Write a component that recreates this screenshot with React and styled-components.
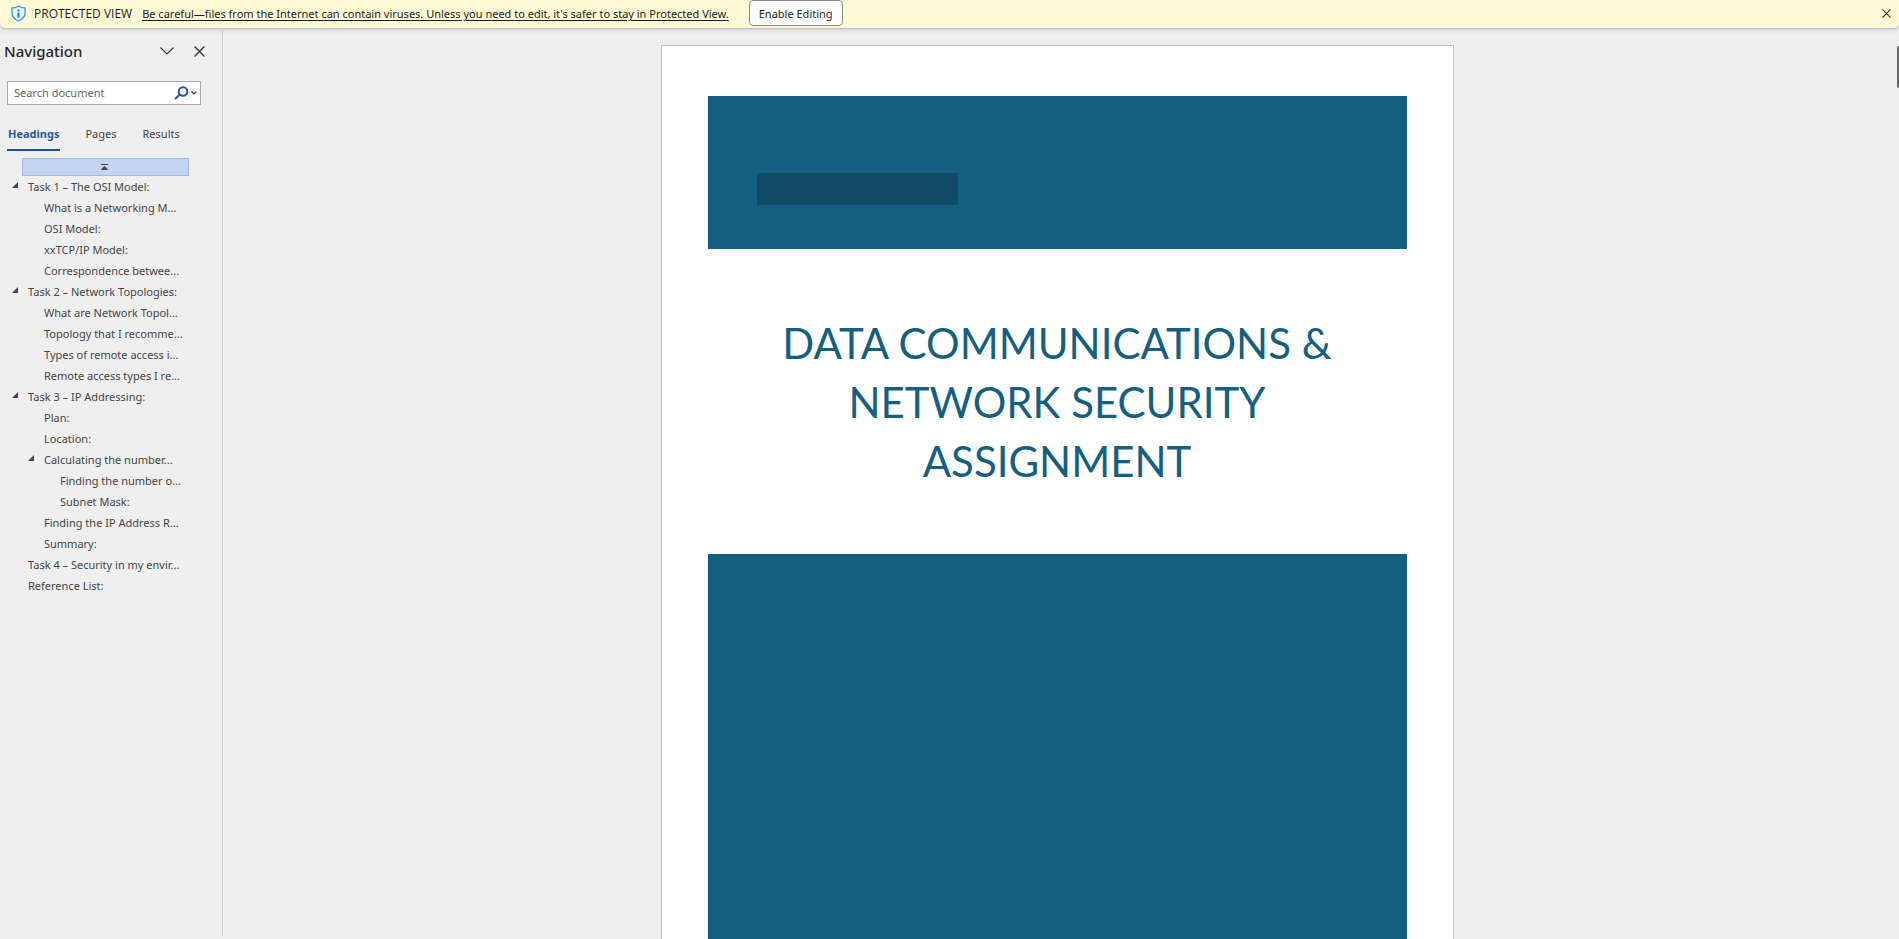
import React, { useState } from "react";
import styled, { createGlobalStyle } from "styled-components";

const GlobalStyle = createGlobalStyle`
  *, *::before, *::after { box-sizing: border-box; }
  body {
    margin: 0;
    background: #efefef;
    color: #262626;
    font-family: "Noto Sans", "Open Sans", sans-serif;
    font-size: 11px;
    line-height: 16px;
  }
  button, input { font: inherit; color: inherit; }
`;

const Window = styled.div`
  display: flex;
  flex-direction: column;
  height: 100vh;
  overflow: hidden;
`;

const MessageBar = styled.header`
  display: flex;
  align-items: center;
  flex: none;
  height: 28px;
  padding: 0 5px 2px 11px;
  background: #fef9d5;
  border-radius: 0 0 5px 5px;
  box-shadow: 0 1px 1px #c4c4c8, 0 2px 5px #cfcfcf;
  z-index: 1;
`;

const BarTitle = styled.strong`
  margin: 0 10px 0 8px;
  padding-top: 2px;
  font-family: "Open Sans", "Noto Sans", sans-serif;
  font-size: 12px;
  font-weight: 400;
  color: #1c1c1c;
`;

const BarLink = styled.a`
  padding-top: 2px;
  color: #1c1c1c;
  text-decoration: underline;
  text-underline-offset: 2px;
`;

const EnableButton = styled.button`
  height: 26px;
  margin-left: 20px;
  padding: 1px 9px 0;
  background: #fff;
  border: 1px solid #8a8a8a;
  border-radius: 4px;
  white-space: nowrap;
`;

const IconButton = styled.button`
  display: flex;
  align-items: center;
  justify-content: center;
  width: ${(p) => p.$width || 16}px;
  height: 16px;
  padding: 0;
  border: 0;
  background: none;
  color: #333;
`;

const Spacer = styled.div`
  flex: 1;
`;

const Body = styled.div`
  display: flex;
  flex: 1;
  min-height: 0;
`;

const Sidebar = styled.aside`
  flex: none;
  width: 223px;
  margin: 2px 0 3px;
  padding-top: 11px;
  border-right: 1px solid #cfcfcf;
`;

const SidebarHeader = styled.div`
  display: flex;
  align-items: center;
  gap: 16px;
  height: 20px;
  padding: 0 15px 0 4px;
`;

const SidebarTitle = styled.h2`
  flex: 1;
  margin: 0;
  font-size: 15px;
  line-height: 20px;
  font-weight: 500;
`;

const SearchBox = styled.form`
  display: flex;
  align-items: center;
  height: 24px;
  margin: 20px 21px 0 7px;
  padding-right: 1px;
  background: #fff;
  border: 1px solid #ababab;
`;

const SearchInput = styled.input`
  flex: 1;
  min-width: 0;
  height: 20px;
  padding: 0 6px 2px;
  border: 0;
  outline: 0;
  background: none;
  &::placeholder { color: #666; opacity: 1; }
`;

const Tabs = styled.div`
  display: flex;
  gap: 24px;
  margin: 18px 0 0 7px;
`;

const Tab = styled.button`
  height: 28px;
  padding: 0 1px 5px;
  border: 0;
  border-bottom: 2px solid ${(p) => (p.$active ? "#1a4fa0" : "transparent")};
  background: none;
  color: ${(p) => (p.$active ? "#2b579a" : "#444")};
  font-weight: ${(p) => (p.$active ? 700 : 400)};
`;

const TopMarker = styled.button`
  display: flex;
  align-items: center;
  justify-content: center;
  width: 167px;
  height: 18px;
  margin: 7px 0 0 22px;
  padding: 0 2px 0 0;
  background: #c3d5f2;
  border: 1px solid #9dbce6;
`;

const Outline = styled.ul`
  margin: 0;
  padding: 0;
  list-style: none;
`;

const OutlineRow = styled.li`
  display: flex;
  height: 21px;
  padding-left: ${(p) => 12 + p.$level * 16}px;
`;

const Toggle = styled.button`
  display: flex;
  width: 16px;
  height: 16px;
  padding: 6px 0 0;
  border: 0;
  background: none;
  color: #444;
`;

const ToggleSpace = styled.span`
  width: 16px;
`;

const OutlineLink = styled.a`
  line-height: 21px;
  color: #444;
  text-decoration: none;
  white-space: nowrap;
`;

const Canvas = styled.main`
  display: flex;
  flex: 1;
  justify-content: center;
  min-width: 0;
  padding: 17px 6px 0 0;
  overflow: hidden;
`;

const Sheet = styled.article`
  display: flex;
  flex-direction: column;
  width: 793px;
  min-height: 1122px;
  margin: 0 auto;
  padding: 50px 46px;
  background: #fff;
  border: 1px solid #c3c3c3;
`;

const Banner = styled.div`
  flex: none;
  height: 153px;
  padding: 77px 49px 0;
  background: #156082;
`;

const Redaction = styled.div`
  width: 201px;
  height: 32px;
  background: #114b65;
`;

const DocTitle = styled.h1`
  margin: 0;
  padding: 65px 48px 63px;
  color: #156082;
  font-family: "Lato", "Noto Sans", sans-serif;
  font-size: 42px;
  line-height: 59px;
  font-weight: 400;
  text-align: center;
`;

const CoverBlock = styled.div`
  flex: 1;
  background: #156082;
`;

const ScrollThumb = styled.div`
  flex: none;
  width: 2px;
  height: 42px;
  margin-top: 18px;
  background: #666;
  border-radius: 2px 0 0 2px;
`;

const ShieldIcon = () => (
  <svg width="15" height="17" viewBox="0 0 15 17" fill="none" aria-hidden="true">
    <path d="M7.500 1C5.600 2.500 3.400 3 1 3v5c0 3.600 2.300 6.300 6.500 8 4.200-1.700 6.500-4.400 6.500-8V3C11.600 3 9.400 2.500 7.500 1Z" fill="#e9f6f8" stroke="#3a96d2" strokeWidth="1.300" />
    <path d="M7.500 4.500v2M7.500 7.500v5" stroke="#1479c4" strokeWidth="2" />
  </svg>
);

const CloseIcon = ({ size }) => (
  <svg width={size} height={size} viewBox="0 0 10 10" fill="none" stroke="currentColor" aria-hidden="true">
    <path d="M.5.5l9 9M9.500.5l-9 9" strokeWidth="1.200" />
  </svg>
);

const ChevronIcon = () => (
  <svg width="14" height="8" viewBox="0 0 14 8" fill="none" stroke="currentColor" aria-hidden="true">
    <path d="M.5.5L7 7l6.500-6.500" strokeWidth="1.100" />
  </svg>
);

const SearchIcon = () => (
  <svg width="15" height="14" viewBox="0 0 15 14" fill="none" stroke="#2b579a" aria-hidden="true">
    <circle cx="9" cy="5.500" r="4.300" strokeWidth="2" />
    <path d="M5.800 8.500L1 13" strokeWidth="2.200" />
  </svg>
);

const SmallChevron = () => (
  <svg width="6" height="4" viewBox="0 0 6 4" fill="none" stroke="#333" aria-hidden="true">
    <path d="M.5.5L3 3 5.500.5" strokeWidth="1.200" />
  </svg>
);

const TopIcon = () => (
  <svg width="7" height="6" viewBox="0 0 7 6" fill="#444" aria-hidden="true">
    <path d="M0 0h7v1H0zM3.500 2L7 5.500V6H0v-.5z" />
  </svg>
);

const TriangleIcon = () => (
  <svg width="6" height="6" viewBox="0 0 6 6" fill="currentColor" aria-hidden="true">
    <path d="M6 0v6H0z" />
  </svg>
);

const headings = [
  { level: 0, text: "Task 1 – The OSI Model:", open: true },
  { level: 1, text: "What is a Networking M..." },
  { level: 1, text: "OSI Model:" },
  { level: 1, text: "xxTCP/IP Model:" },
  { level: 1, text: "Correspondence betwee..." },
  { level: 0, text: "Task 2 – Network Topologies:", open: true },
  { level: 1, text: "What are Network Topol..." },
  { level: 1, text: "Topology that I recomme..." },
  { level: 1, text: "Types of remote access i..." },
  { level: 1, text: "Remote access types I re..." },
  { level: 0, text: "Task 3 – IP Addressing:", open: true },
  { level: 1, text: "Plan:" },
  { level: 1, text: "Location:" },
  { level: 1, text: "Calculating the number...", open: true },
  { level: 2, text: "Finding the number o..." },
  { level: 2, text: "Subnet Mask:" },
  { level: 1, text: "Finding the IP Address R..." },
  { level: 1, text: "Summary:" },
  { level: 0, text: "Task 4 – Security in my envir..." },
  { level: 0, text: "Reference List:" },
];

const tabs = ["Headings", "Pages", "Results"];

export default function App() {
  const [active, setActive] = useState("Headings");
  return (
    <Window>
      <GlobalStyle />
      <MessageBar>
        <ShieldIcon />
        <BarTitle>PROTECTED VIEW</BarTitle>
        <BarLink href="#protected-view">
          Be careful—files from the Internet can contain viruses. Unless you need to edit, it's safer to stay in Protected View.
        </BarLink>
        <EnableButton type="button">Enable Editing</EnableButton>
        <Spacer />
        <IconButton type="button" aria-label="Close message"><CloseIcon size={9} /></IconButton>
      </MessageBar>
      <Body>
        <Sidebar>
          <SidebarHeader>
            <SidebarTitle>Navigation</SidebarTitle>
            <IconButton type="button" aria-label="Pane options"><ChevronIcon /></IconButton>
            <IconButton type="button" aria-label="Close pane"><CloseIcon size={11} /></IconButton>
          </SidebarHeader>
          <SearchBox role="search">
            <SearchInput type="text" aria-label="Search document" placeholder="Search document" />
            <IconButton type="button" aria-label="Search"><SearchIcon /></IconButton>
            <IconButton type="button" $width={10} aria-label="Search options"><SmallChevron /></IconButton>
          </SearchBox>
          <Tabs role="tablist">
            {tabs.map((t) => (
              <Tab key={t} type="button" role="tab" aria-selected={t === active} $active={t === active} onClick={() => setActive(t)}>
                {t}
              </Tab>
            ))}
          </Tabs>
          <TopMarker type="button" aria-label="Jump to the beginning"><TopIcon /></TopMarker>
          <Outline>
            {headings.map((h) => (
              <OutlineRow key={h.text} $level={h.level}>
                {h.open ? (
                  <Toggle type="button" aria-expanded="true" aria-label={"Collapse " + h.text}><TriangleIcon /></Toggle>
                ) : (
                  <ToggleSpace />
                )}
                <OutlineLink href="#heading">{h.text}</OutlineLink>
              </OutlineRow>
            ))}
          </Outline>
        </Sidebar>
        <Canvas>
          <Sheet>
            <Banner><Redaction /></Banner>
            <DocTitle>DATA COMMUNICATIONS &amp; NETWORK SECURITY ASSIGNMENT</DocTitle>
            <CoverBlock />
          </Sheet>
        </Canvas>
        <ScrollThumb />
      </Body>
    </Window>
  );
}
